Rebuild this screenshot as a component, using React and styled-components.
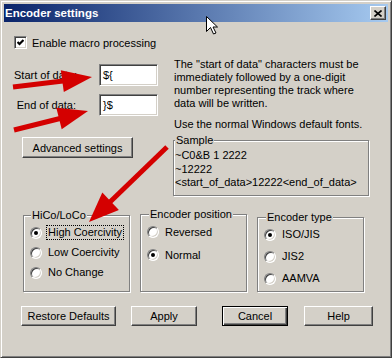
import styled, { createGlobalStyle } from "styled-components";

const GlobalStyle = createGlobalStyle`
  * { box-sizing: border-box; }
  html, body { margin: 0; padding: 0; background: #d4d0c8; }
  body {
    font-family: "Liberation Sans", Arial, sans-serif;
    font-size: 11px;
    color: #000;
  }
`;

const Window = styled.div`
  position: relative;
  width: 392px;
  height: 358px;
  background: #d4d0c8;
  border: 1px solid;
  border-color: #d4d0c8 #404040 #404040 #d4d0c8;
  box-shadow: inset 1px 1px #ffffff, inset -1px -1px #808080;
  padding: 3px;
  display: flex;
  flex-direction: column;
`;

const TitleBar = styled.div`
  height: 18px;
  display: flex;
  align-items: center;
  justify-content: space-between;
  padding: 0 2px 0 1px;
  background: linear-gradient(to right, #0a246a, #a6caf0);
  color: #fff;
  font-weight: bold;
  font-size: 11.5px;
`;

const CloseButton = styled.div`
  width: 16px;
  height: 14px;
  display: flex;
  align-items: center;
  justify-content: center;
  background: #d4d0c8;
  border: 1px solid;
  border-color: #fff #404040 #404040 #fff;
  box-shadow: inset -1px -1px #808080;
`;

const Body = styled.div`
  display: flex;
  flex-direction: column;
  padding-left: 10px;
`;

const CheckRow = styled.div`
  display: flex;
  align-items: center;
  height: 13px;
  margin-top: 14px;
  gap: 5px;
`;

const Sunken = styled.div`
  background: #fff;
  border: 1px solid;
  border-color: #808080 #fff #fff #808080;
  box-shadow: inset 1px 1px #404040, inset -1px -1px #d4d0c8;
`;

const CheckBox = styled(Sunken)`
  width: 13px;
  height: 13px;
  display: flex;
  align-items: center;
  justify-content: center;
`;

const TopSection = styled.div`
  display: flex;
`;

const LeftCol = styled.div`
  width: 144px;
  padding-top: 15px;
  display: flex;
  flex-direction: column;
`;

const FieldRow = styled.div`
  display: flex;
  align-items: center;
  height: 22px;
  & + & {
    margin-top: 8px;
  }
`;

const FieldLabel = styled.span`
  width: 62px;
  margin-right: 23px;
  text-align: right;
  white-space: nowrap;
`;

const TextBox = styled(Sunken)`
  width: 59px;
  height: 22px;
  display: flex;
  align-items: center;
  padding-left: 3px;
`;

const Button = styled.div`
  width: ${(p) => p.$w}px;
  height: 20px;
  margin-left: ${(p) => p.$ml || 0}px;
  display: flex;
  align-items: center;
  justify-content: center;
  background: #d4d0c8;
  border: 1px solid;
  border-color: ${(p) => (p.$default ? "#000" : "#fff #404040 #404040 #fff")};
  box-shadow: ${(p) =>
    p.$default
      ? "inset 1px 1px #fff, inset -1px -1px #404040, inset -2px -2px #808080"
      : "inset -1px -1px #808080"};
  white-space: nowrap;
`;

const AdvancedButton = styled(Button)`
  margin-top: 21px;
  height: 21px;
`;

const RightCol = styled.div`
  width: 196px;
  margin-left: 15px;
  padding-top: 9px;
  display: flex;
  flex-direction: column;
`;

const Para = styled.p`
  margin: ${(p) => p.$mt || 0}px 0 0;
  line-height: 13px;
  padding-left: 1px;
`;

const GroupBox = styled.div`
  border: 1px solid #808080;
  box-shadow: inset 1px 1px #fff, 1px 1px #fff;
  margin-top: ${(p) => p.$mt || 0}px;
  display: flex;
  flex-direction: column;
`;

const Caption = styled.span`
  align-self: flex-start;
  margin: -7px 0 0 ${(p) => p.$ml}px;
  padding: 0 1px;
  line-height: 13px;
  background: #d4d0c8;
  white-space: nowrap;
`;

const SampleLines = styled.div`
  padding: 2px 0 5px 1px;
  line-height: 13.5px;
  white-space: nowrap;
`;

const GroupsRow = styled.div`
  display: flex;
  gap: 10px;
  height: 77px;
  margin: 19px 0 0 9px;
  & > * {
    width: 107px;
  }
`;

const RadioList = styled.div`
  display: flex;
  flex-direction: column;
  padding: ${(p) => p.$pt || 0}px 0 0 6px;
`;

const RadioRow = styled.div`
  display: flex;
  align-items: center;
  gap: 4px;
  height: ${(p) => p.$h}px;
`;

const RadioCircle = styled.span`
  width: 12px;
  height: 12px;
  flex: none;
  border-radius: 50%;
  background: #fff;
  border: 1px solid;
  border-color: #808080 #fff #fff #808080;
  box-shadow: inset 1px 1px #404040, inset -1px -1px #d4d0c8;
  display: flex;
  align-items: center;
  justify-content: center;
  &::after {
    content: "";
    width: 4px;
    height: 4px;
    border-radius: 50%;
    background: ${(p) => (p.$on ? "#000" : "transparent")};
  }
`;

const RadioText = styled.span`
  padding: 0 1px;
  line-height: 13px;
  border: 1px dotted ${(p) => (p.$focus ? "#000" : "transparent")};
  white-space: nowrap;
`;

const ButtonRow = styled.div`
  display: flex;
  margin: 14px 0 0 7px;
`;

const Overlay = styled.svg`
  position: absolute;
  top: -1px;
  left: -1px;
  width: 392px;
  height: 358px;
  pointer-events: none;
`;

const Radio = ({ label, on, focus, h }) => (
  <RadioRow $h={h}>
    <RadioCircle $on={on} />
    <RadioText $focus={focus}>{label}</RadioText>
  </RadioRow>
);

const RED = "#d40000";

const App = () => {
  return (
    <>
      <GlobalStyle />
      <Window>
        <TitleBar>
          <span>Encoder settings</span>
          <CloseButton>
            <svg width="8" height="7" viewBox="0 0 8 7">
              <path d="M0.5 0.5 L7.5 6.5 M7.5 0.5 L0.5 6.5" stroke="#000" strokeWidth="1.6" />
            </svg>
          </CloseButton>
        </TitleBar>
        <Body>
          <CheckRow>
            <CheckBox>
              <svg width="7" height="7" viewBox="0 0 7 7">
                <path d="M0.5 3 L2.5 5 L6.5 1" fill="none" stroke="#000" strokeWidth="2.2" />
              </svg>
            </CheckBox>
            <span>Enable macro processing</span>
          </CheckRow>

          <TopSection>
            <LeftCol>
              <FieldRow>
                <FieldLabel>Start of data:</FieldLabel>
                <TextBox>{"${"}</TextBox>
              </FieldRow>
              <FieldRow>
                <FieldLabel>End of data:</FieldLabel>
                <TextBox>{"}$"}</TextBox>
              </FieldRow>
              <AdvancedButton $w={111} $ml={8}>
                Advanced settings
              </AdvancedButton>
            </LeftCol>
            <RightCol>
              <Para>
                The "start of data" characters must be immediately followed by a one-digit
                number representing the track where data will be written.
              </Para>
              <Para $mt={8}>Use the normal Windows default fonts.</Para>
              <GroupBox $mt={9}>
                <Caption $ml={1}>Sample</Caption>
                <SampleLines>
                  <div>~C0&amp;B 1 2222</div>
                  <div>~12222</div>
                  <div>&lt;start_of_data&gt;12222&lt;end_of_data&gt;</div>
                </SampleLines>
              </GroupBox>
            </RightCol>
          </TopSection>

          <GroupsRow>
            <GroupBox>
              <Caption $ml={7}>HiCo/LoCo</Caption>
              <RadioList $pt={1}>
                <Radio h={20} on focus label="High Coercivity" />
                <Radio h={20} label="Low Coercivity" />
                <Radio h={20} label="No Change" />
              </RadioList>
            </GroupBox>
            <GroupBox $mt={-1}>
              <Caption $ml={8}>Encoder position</Caption>
              <RadioList>
                <Radio h={23} label="Reversed" />
                <Radio h={23} on label="Normal" />
              </RadioList>
            </GroupBox>
            <GroupBox $mt={2}>
              <Caption $ml={8}>Encoder type</Caption>
              <RadioList>
                <Radio h={22} on label="ISO/JIS" />
                <Radio h={22} label="JIS2" />
                <Radio h={22} label="AAMVA" />
              </RadioList>
            </GroupBox>
          </GroupsRow>

          <ButtonRow>
            <Button $w={95}>Restore Defaults</Button>
            <Button $w={66} $ml={15}>Apply</Button>
            <Button $w={66} $ml={25} $default>Cancel</Button>
            <Button $w={69} $ml={16}>Help</Button>
          </ButtonRow>
        </Body>

        <Overlay viewBox="0 0 392 358">
          <line x1="13" y1="87" x2="63" y2="81" stroke={RED} strokeWidth="5" />
          <polygon points="92,77 63.8,92.1 60.8,70.3" fill={RED} />
          <line x1="14" y1="130" x2="60" y2="118.5" stroke={RED} strokeWidth="5" />
          <polygon points="88,111 61.7,129.2 56.3,107.8" fill={RED} />
          <line x1="167" y1="147" x2="110" y2="202" stroke={RED} strokeWidth="5" />
          <polygon points="89,222 118.9,209.9 102.3,192.5" fill={RED} />
          <g transform="translate(206.5 16.5)">
            <path
              d="M0 0 L0 15 L4 11 L7 17.5 L9.5 16.5 L6.5 10.5 L11 10.5 Z"
              fill="#fff"
              stroke="#000"
              strokeWidth="1"
              strokeLinejoin="miter"
            />
          </g>
        </Overlay>
      </Window>
    </>
  );
};

export default App;
